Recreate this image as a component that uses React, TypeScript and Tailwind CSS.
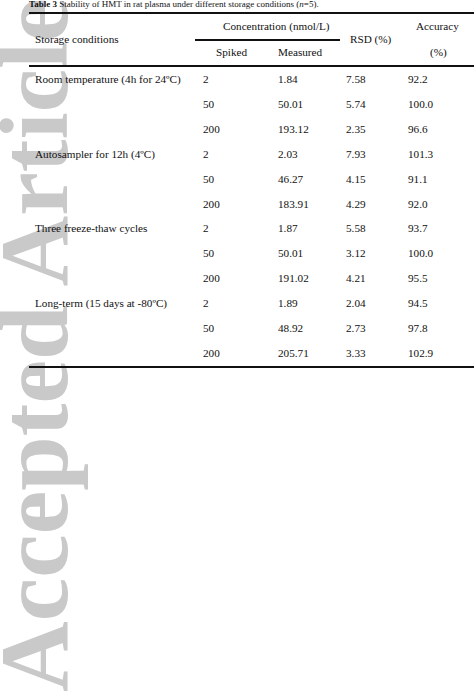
import React from "react";

const rows: [string, string, string, string, string][] = [
  ["Room temperature (4h for 24ºC)", "2", "1.84", "7.58", "92.2"],
  ["", "50", "50.01", "5.74", "100.0"],
  ["", "200", "193.12", "2.35", "96.6"],
  ["Autosampler for 12h (4ºC)", "2", "2.03", "7.93", "101.3"],
  ["", "50", "46.27", "4.15", "91.1"],
  ["", "200", "183.91", "4.29", "92.0"],
  ["Three freeze-thaw cycles", "2", "1.87", "5.58", "93.7"],
  ["", "50", "50.01", "3.12", "100.0"],
  ["", "200", "191.02", "4.21", "95.5"],
  ["Long-term (15 days at -80ºC)", "2", "1.89", "2.04", "94.5"],
  ["", "50", "48.92", "2.73", "97.8"],
  ["", "200", "205.71", "3.33", "102.9"],
];

export default function App() {
  return (
    <div
      className="relative w-[474px] h-[693px] overflow-hidden bg-white text-[#111]"
      style={{ fontFamily: '"Liberation Serif", "Times New Roman", serif' }}
    >
      {/* watermark */}
      <span
        className="absolute left-[-15px] top-[692px] origin-top-left -rotate-90 whitespace-nowrap font-bold text-[98px] leading-none text-[#c9c9c9] z-0 select-none"
      >
        Accepted Article
      </span>

      <div className="relative z-10 pl-[29px]">
        {/* title */}
        <div className="h-[8px] text-[9px] leading-[8px] whitespace-nowrap">
          <span className="font-bold">Table 3</span> Stability of HMT in rat plasma under different storage
          conditions (<span className="italic">n</span>=5).
        </div>
        <div className="mt-[4px] h-[2px] bg-[#111]" />

        {/* header */}
        <div className="grid grid-cols-[166px_75px_70px_62px_1fr] grid-rows-[25px_1.5px_24.5px] text-[11.2px]">
          <div className="row-span-3 col-start-1 row-start-1 flex items-center pl-[6px]">Storage conditions</div>
          <div className="col-start-2 col-span-2 row-start-1 flex items-center pl-[28px]">
            Concentration (nmol/L)
          </div>
          <div className="col-start-2 col-span-2 row-start-2 bg-[#111]" />
          <div className="col-start-2 row-start-3 flex items-center pl-[21px]">Spiked</div>
          <div className="col-start-3 row-start-3 flex items-center pl-[8px]">Measured</div>
          <div className="col-start-4 row-start-1 row-span-3 flex items-center pl-[10px]">RSD (%)</div>
          <div className="col-start-5 row-start-1 flex items-center pl-[14px]">Accuracy</div>
          <div className="col-start-5 row-start-3 flex items-center pl-[28px]">(%)</div>
        </div>
        <div className="h-[2px] bg-[#111]" />

        {/* body */}
        <div className="text-[11.2px]">
          {rows.map((r, i) => (
            <div key={i} className="grid grid-cols-[166px_75px_70px_62px_1fr] h-[24.9px] items-center whitespace-nowrap">
              <div className="pl-[6px]">{r[0]}</div>
              <div className="pl-[8px]">{r[1]}</div>
              <div className="pl-[8px]">{r[2]}</div>
              <div className="pl-[6px]">{r[3]}</div>
              <div className="pl-[6px]">{r[4]}</div>
            </div>
          ))}
        </div>
        <div className="h-[2px] bg-[#111]" />
      </div>
    </div>
  );
}
